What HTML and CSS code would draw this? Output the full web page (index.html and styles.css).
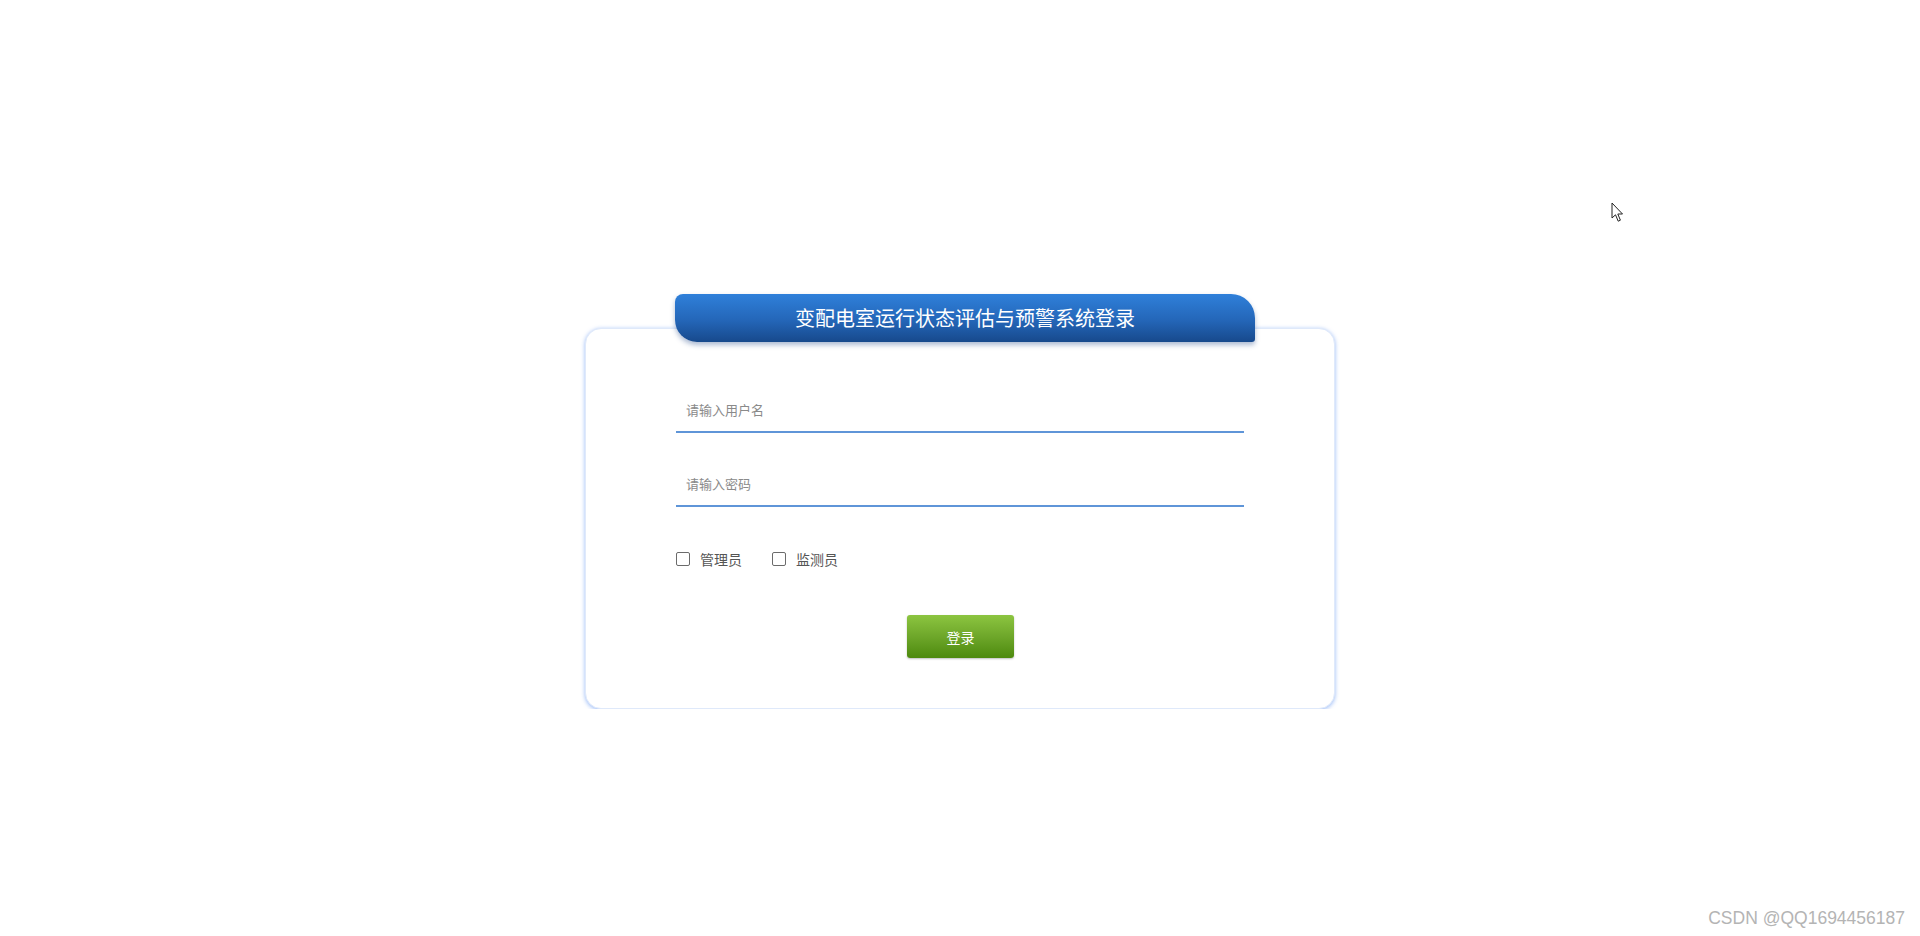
FILE: index.html
```html
<!DOCTYPE html>
<html lang="zh-CN">
<head>
<meta charset="utf-8">
<title>变配电室运行状态评估与预警系统登录</title>
<link rel="stylesheet" href="styles.css">
</head>
<body>
<div class="page">
  <div class="login">
    <div class="login-title">变配电室运行状态评估与预警系统登录</div>
    <form class="login-card">
      <input class="field" type="text" placeholder="请输入用户名">
      <input class="field" type="password" placeholder="请输入密码">
      <div class="roles">
        <label class="role"><span class="box"></span><span>管理员</span></label>
        <label class="role"><span class="box"></span><span>监测员</span></label>
      </div>
      <div class="actions">
        <button class="btn" type="button">登录</button>
      </div>
    </form>
  </div>
</div>
<div class="watermark">CSDN @QQ1694456187</div>
<svg class="cursor" width="13" height="21" viewBox="0 0 13 21"><path d="M1 1 L1 16 L4.5 12.8 L7.2 19.2 L9.4 18.2 L6.8 12 L11.5 12 Z" fill="#fff" stroke="#222" stroke-width="1" stroke-linejoin="round"/></svg>
</body>
</html>
```
FILE: styles.css
```css
html, body {
  margin: 0;
  padding: 0;
  background: #ffffff;
  font-family: "Microsoft YaHei", "Noto Sans CJK SC", "Liberation Sans", sans-serif;
}
.page {
  display: flex;
  justify-content: center;
  padding-top: 294px;
}
.login {
  width: 750px;
  display: flex;
  flex-direction: column;
}
.login-title {
  position: relative;
  z-index: 2;
  margin-left: 90px;
  width: 580px;
  height: 48px;
  box-sizing: border-box;
  border-radius: 8px 24px 3px 22px;
  background: linear-gradient(to bottom, #2f80da 0%, #2466b8 55%, #17498c 100%);
  box-shadow: 0 3px 5px rgba(20, 60, 130, 0.35);
  color: #ffffff;
  font-size: 20px;
  line-height: 47px;
  text-align: center;
}
.login-card {
  margin: -14px 0 0 0;
  height: 381px;
  box-sizing: border-box;
  border: 1px solid #dfe9fa;
  border-radius: 16px;
  box-shadow: 0 1px 4px rgba(70, 130, 240, 0.55);
  background: #ffffff;
  padding: 64px 90px 0 90px;
  display: flex;
  flex-direction: column;
}
.field {
  display: block;
  width: 568px;
  height: 40px;
  box-sizing: border-box;
  border: none;
  border-bottom: 2px solid #5f95d8;
  outline: none;
  padding: 0 10px 6px 10px;
  margin: 0;
  font-family: inherit;
  font-size: 13px;
  color: #333;
  background: transparent;
}
.field::placeholder {
  color: #8a8a8a;
}
.field + .field {
  margin-top: 34px;
}
.roles {
  display: flex;
  align-items: center;
  gap: 30px;
  margin-top: 42px;
  height: 20px;
}
.role {
  display: flex;
  align-items: center;
  gap: 10px;
  font-size: 14px;
  color: #555;
}
.box {
  width: 12px;
  height: 12px;
  border: 1px solid #6b6b6b;
  border-radius: 2px;
  background: #fff;
}
.actions {
  display: flex;
  justify-content: center;
  margin-top: 46px;
}
.btn {
  margin-left: 1px;
  width: 107px;
  height: 43px;
  border: none;
  border-radius: 3px;
  background: linear-gradient(to bottom, #8cc540 0%, #6ea72a 50%, #4d8a0e 100%);
  box-shadow: 0 1px 2px rgba(0, 0, 0, 0.25);
  color: #ffffff;
  font-family: inherit;
  font-size: 14px;
  cursor: pointer;
}
.watermark {
  position: absolute;
  right: 15px;
  top: 908px;
  font-family: "Liberation Sans", sans-serif;
  font-size: 17.5px;
  color: #b4b4b4;
  text-shadow: 0 0 1px #fff;
}
.cursor {
  position: absolute;
  left: 1611px;
  top: 202px;
}
```
